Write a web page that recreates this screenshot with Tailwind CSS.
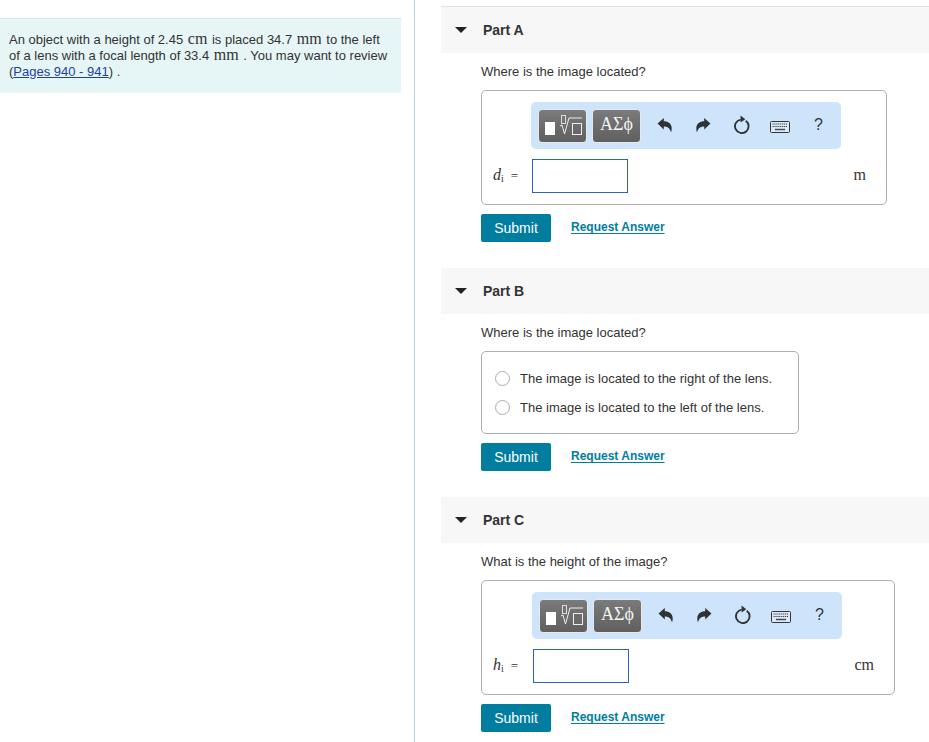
<!doctype html>
<html lang="en">
  <head>
    <meta charset="UTF-8" />
    <title>Part A</title>
    <script src="https://cdn.jsdelivr.net/npm/@tailwindcss/browser@4"></script>
  </head>
  <body class="bg-white text-[#333] text-[13px] font-['Liberation_Sans',Arial,sans-serif]">
    <svg class="hidden">
      <symbol id="undo" viewBox="0 0 16 16"><path d="M.5 6.5 6.8 1V4.2C12 4.2 16.5 8 14 15.5 13 11.5 11 9.5 6.8 9.5V12.5Z" fill="#2f3336" /></symbol>
      <symbol id="redo" viewBox="0 0 16 16"><path d="M15.5 6.5 9.2 1V4.2C4 4.2-.5 8 2 15.5 3 11.5 5 9.5 9.2 9.5V12.5Z" fill="#2f3336" /></symbol>
      <symbol id="reload" viewBox="0 0 18 20"><path d="M13.5 6A7.2 7.2 0 1 1 8 4.8" fill="none" stroke="#2f3336" stroke-width="2" /><path d="M8 .5 13 4.5 8 8Z" fill="#2f3336" /></symbol>
      <symbol id="keys" viewBox="0 0 20 12"><rect x=".5" y=".5" width="19" height="11" rx="1" fill="#dfe8f0" stroke="#2f3840" /><path d="M2.5 3h15M2.5 5.5h15" stroke="#3c4650" stroke-width="1.2" stroke-dasharray="1.2 .7" /><path d="M5 8.5h10" stroke="#3c4650" stroke-width="1.4" /></symbol>
      <symbol id="root" viewBox="0 0 47 32"><rect x="6" y="12" width="10" height="13" fill="#fff" /><path d="M21 16 23 15 25.5 24 30 8H43" fill="none" stroke="#eee" stroke-width="1" /><rect x="22.5" y="5.5" width="4" height="8" fill="none" stroke="#ddd" /><rect x="33.5" y="13.5" width="9" height="11" fill="none" stroke="#eee" /></symbol>
    </svg>
    <div class="flex h-[742px] overflow-hidden">
      <!-- left panel -->
      <div class="w-[415px] shrink-0 border-r border-[#b9cfe4] pt-[18px]">
        <div class="w-[401px] h-[75px] bg-[#e6f6f6] border-t border-[#dde3e6] pl-[9px] pr-[8px] pt-[13px] leading-[16px]">
          An object with a height of 2.45 <span class="mx-[1px] font-['Liberation_Serif',serif] text-[16px] leading-[0]">cm</span> is placed 34.7 <span class="mx-[1px] font-['Liberation_Serif',serif] text-[16px] leading-[0]">mm</span> to the left of a lens with a focal length of 33.4 <span class="mx-[1px] font-['Liberation_Serif',serif] text-[16px] leading-[0]">mm</span> . You may want to review (<a class="text-[#1c3fa8] underline">Pages 940 - 941</a>) .
        </div>
      </div>
      <!-- parts -->
      <div class="flex-1 pl-[26px] pt-[6px]">
        <!-- part a -->
        <div class="h-[47px] bg-[#f7f7f7] border-t border-[#e2e2e2] flex items-center font-bold text-[14px]">
          <span class="ml-[14px] w-0 h-0 border-x-[6px] border-x-transparent border-t-[6px] border-t-[#222]"></span>
          <span class="ml-[16px]">Part A</span>
        </div>
        <div class="ml-[40px] mt-[10px] leading-[17px]">Where is the image located?</div>
        <div class="ml-[40px] mt-[10px] w-[406px] h-[115px] border border-[#adadad] rounded-[5px] pt-[11px]">
          <div class="ml-[49px] w-[310px] h-[47px] bg-[#cde4fb] rounded-[5px] flex items-center pl-[7px]">
            <span class="w-[49px] h-[34px] rounded-[4px] border border-[#e8e8e8] bg-gradient-to-b from-[#7b7b7b] to-[#5f5f5f] flex items-center justify-center">
              <svg class="w-[47px] h-[32px]"><use href="#root" /></svg>
            </span>
            <span class="ml-[5px] w-[49px] h-[34px] pb-[2px] rounded-[4px] border border-[#e8e8e8] bg-gradient-to-b from-[#7b7b7b] to-[#5f5f5f] flex items-center justify-center text-[#f2f2f2] text-[18px] font-['Liberation_Serif',serif]">ΑΣϕ</span>
            <span class="ml-[5px] w-[38px] flex justify-center mb-[2px]"><svg class="w-[16px] h-[16px]"><use href="#undo" /></svg></span>
            <span class="w-[38px] flex justify-center mb-[2px]"><svg class="w-[16px] h-[16px]"><use href="#redo" /></svg></span>
            <span class="w-[38px] flex justify-center mb-[2px]"><svg class="w-[17px] h-[19px]"><use href="#reload" /></svg></span>
            <span class="w-[39px] flex justify-center mt-[2px]"><svg class="w-[20px] h-[12px]"><use href="#keys" /></svg></span>
            <span class="w-[39px] text-center text-[16px] mb-[1px]">?</span>
          </div>
          <div class="mt-[10px] flex items-center h-[34px]">
            <span class="ml-[11px] w-[39px] mb-[3px] font-['Liberation_Serif',serif] text-[16px]"><i>d</i><sub class="text-[10px]">i</sub><span class="ml-[7px] text-[13px]">=</span></span>
            <span class="w-[96px] h-[34px] border border-[#2b63bf]"></span>
            <span class="ml-auto mr-[20px] mb-[2px] font-['Liberation_Serif',serif] text-[16px]">m</span>
          </div>
        </div>
        <div class="ml-[40px] mt-[9px] flex items-center">
          <span class="w-[70px] h-[28px] rounded-[2px] bg-[#007d9f] text-white text-[14px] flex items-center justify-center">Submit</span>
          <a class="ml-[20px] mb-[2px] text-[12px] font-bold text-[#007d9f] underline underline-offset-2">Request Answer</a>
        </div>
        <!-- part b -->
        <div class="mt-[26px] h-[46px] bg-[#f7f7f7] flex items-center font-bold text-[14px]">
          <span class="ml-[14px] w-0 h-0 border-x-[6px] border-x-transparent border-t-[6px] border-t-[#222]"></span>
          <span class="ml-[16px]">Part B</span>
        </div>
        <div class="ml-[40px] mt-[10px] leading-[17px]">Where is the image located?</div>
        <div class="ml-[40px] mt-[10px] w-[318px] h-[83px] border border-[#adadad] rounded-[5px] pt-[12px] pl-[13px]">
          <div class="h-[29px] flex items-center"><span class="w-[15px] h-[15px] rounded-full border border-[#adadad] bg-white"></span><span class="ml-[10px]">The image is located to the right of the lens.</span></div>
          <div class="h-[29px] flex items-center"><span class="w-[15px] h-[15px] rounded-full border border-[#adadad] bg-white"></span><span class="ml-[10px]">The image is located to the left of the lens.</span></div>
        </div>
        <div class="ml-[40px] mt-[9px] flex items-center">
          <span class="w-[70px] h-[28px] rounded-[2px] bg-[#007d9f] text-white text-[14px] flex items-center justify-center">Submit</span>
          <a class="ml-[20px] mb-[2px] text-[12px] font-bold text-[#007d9f] underline underline-offset-2">Request Answer</a>
        </div>
        <!-- part c -->
        <div class="mt-[26px] h-[46px] bg-[#f7f7f7] flex items-center font-bold text-[14px]">
          <span class="ml-[14px] w-0 h-0 border-x-[6px] border-x-transparent border-t-[6px] border-t-[#222]"></span>
          <span class="ml-[16px]">Part C</span>
        </div>
        <div class="ml-[40px] mt-[10px] leading-[17px]">What is the height of the image?</div>
        <div class="ml-[40px] mt-[10px] w-[414px] h-[115px] border border-[#adadad] rounded-[5px] pt-[11px]">
          <div class="ml-[50px] w-[310px] h-[47px] bg-[#cde4fb] rounded-[5px] flex items-center pl-[7px]">
            <span class="w-[49px] h-[34px] rounded-[4px] border border-[#e8e8e8] bg-gradient-to-b from-[#7b7b7b] to-[#5f5f5f] flex items-center justify-center">
              <svg class="w-[47px] h-[32px]"><use href="#root" /></svg>
            </span>
            <span class="ml-[5px] w-[49px] h-[34px] pb-[2px] rounded-[4px] border border-[#e8e8e8] bg-gradient-to-b from-[#7b7b7b] to-[#5f5f5f] flex items-center justify-center text-[#f2f2f2] text-[18px] font-['Liberation_Serif',serif]">ΑΣϕ</span>
            <span class="ml-[5px] w-[38px] flex justify-center mb-[2px]"><svg class="w-[16px] h-[16px]"><use href="#undo" /></svg></span>
            <span class="w-[38px] flex justify-center mb-[2px]"><svg class="w-[16px] h-[16px]"><use href="#redo" /></svg></span>
            <span class="w-[38px] flex justify-center mb-[2px]"><svg class="w-[17px] h-[19px]"><use href="#reload" /></svg></span>
            <span class="w-[39px] flex justify-center mt-[2px]"><svg class="w-[20px] h-[12px]"><use href="#keys" /></svg></span>
            <span class="w-[39px] text-center text-[16px] mb-[1px]">?</span>
          </div>
          <div class="mt-[10px] flex items-center h-[34px]">
            <span class="ml-[11px] w-[40px] mb-[3px] font-['Liberation_Serif',serif] text-[16px]"><i>h</i><sub class="text-[10px]">i</sub><span class="ml-[7px] text-[13px]">=</span></span>
            <span class="w-[96px] h-[34px] border border-[#2b63bf]"></span>
            <span class="ml-auto mr-[20px] mb-[2px] font-['Liberation_Serif',serif] text-[16px]">cm</span>
          </div>
        </div>
        <div class="ml-[40px] mt-[9px] flex items-center">
          <span class="w-[70px] h-[28px] rounded-[2px] bg-[#007d9f] text-white text-[14px] flex items-center justify-center">Submit</span>
          <a class="ml-[20px] mb-[2px] text-[12px] font-bold text-[#007d9f] underline underline-offset-2">Request Answer</a>
        </div>
      </div>
    </div>
  </body>
</html>
